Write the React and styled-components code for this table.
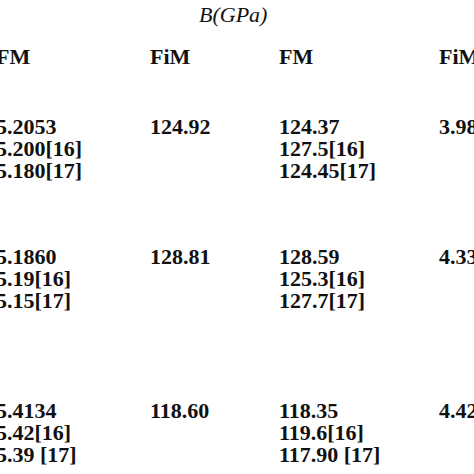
import React from 'react'
import styled, { createGlobalStyle } from 'styled-components'

const GlobalStyle = createGlobalStyle`
  html, body {
    margin: 0;
    padding: 0;
    background: #fff;
    overflow: hidden;
  }
  body {
    font-family: "Liberation Serif", "Times New Roman", serif;
    color: #111;
  }
`

const rows = [
    { gap: 48, a: ['5.2053', '5.200[16]', '5.180[17]'], b: '124.92', c: ['124.37', '127.5[16]', '124.45[17]'], d: '3.98' },
    { gap: 64, a: ['5.1860', '5.19[16]', '5.15[17]'], b: '128.81', c: ['128.59', '125.3[16]', '127.7[17]'], d: '4.33' },
    { gap: 88, a: ['5.4134', '5.42[16]', '5.39 [17]'], b: '118.60', c: ['118.35', '119.6[16]', '117.90 [17]'], d: '4.42' },
]

export default function App() {
    return (
        <>
            <GlobalStyle />
            <Sheet>
                <Title>B(GPa)</Title>
                <Row $gap={20}>
                    <Cell>FM</Cell>
                    <Cell>FiM</Cell>
                    <Cell>FM</Cell>
                    <Cell>FiM</Cell>
                </Row>
                {rows.map((r, i) => (
                    <Row key={i} $gap={r.gap}>
                        <Cell>{r.a.map(v => <Line key={v}>{v}</Line>)}</Cell>
                        <Cell><Line>{r.b}</Line></Cell>
                        <Cell>{r.c.map(v => <Line key={v}>{v}</Line>)}</Cell>
                        <Cell><Line>{r.d}</Line></Cell>
                    </Row>
                ))}
            </Sheet>
        </>
    )
}

const Sheet = styled.div`
    width: 474px;
    height: 474px;
    overflow: hidden;
    padding-top: 4px;
    box-sizing: border-box;
`

const Title = styled.div`
    font-style: italic;
    font-size: 22px;
    line-height: 22px;
    padding-left: 199px;
`

const Row = styled.div`
    display: grid;
    grid-template-columns: 154px 129px 160px 1fr;
    margin-left: -4px;
    margin-top: ${p => p.$gap}px;
    font-weight: bold;
    font-size: 22px;
    line-height: 22px;
    white-space: nowrap;
`

const Cell = styled.div`
    display: flex;
    flex-direction: column;
`

const Line = styled.span`
    display: block;
`
